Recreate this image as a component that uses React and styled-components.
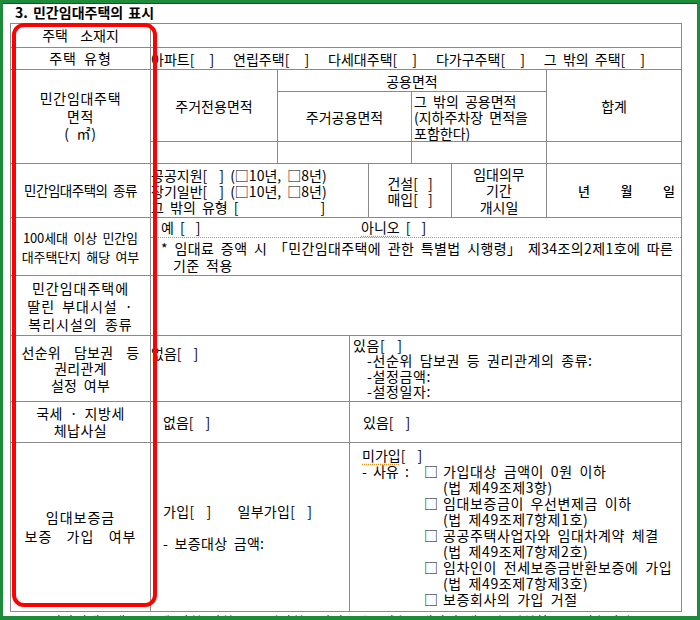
import React from "react";
import styled, { createGlobalStyle } from "styled-components";

const GlobalStyle = createGlobalStyle`
  html, body {
    margin: 0;
    padding: 0;
    background: #ffffff;
  }
  body {
    font-family: "Noto Sans CJK KR", "Noto Sans", sans-serif;
  }
`;

const Frame = styled.div`
  position: relative;
  width: 700px;
  height: 620px;
  box-sizing: border-box;
  border: 3px solid #1e8b3a;
  border-bottom-width: 4px;
  background: #ffffff;
  overflow: hidden;
`;

const Sheet = styled.div`
  height: 100%;
  border-top: 1px solid #3c3c3c;
  padding-left: 7px;
  color: #000000;
  font-size: 14px;
  word-spacing: 3px;
`;

const Heading = styled.h3`
  margin: 0;
  height: 19px;
  padding-left: 5px;
  font-size: 14px;
  line-height: 16px;
  font-weight: 700;
  word-spacing: 2px;
`;

const Form = styled.table`
  width: 671px;
  border-collapse: collapse;
  table-layout: fixed;
  border: 1px solid #6f6f6f;
`;

const Row = styled.tr`
  height: ${p => p.$h}px;
`;

const Label = styled.th`
  border: 1px solid #8a8a8a;
  padding: 0;
  font-weight: 400;
  font-size: ${p => p.$fs || 14}px;
  text-align: center;
  vertical-align: middle;
  letter-spacing: ${p => p.$ls || 0}px;
  line-height: ${p => p.$lh || 17}px;
  white-space: nowrap;
  overflow: hidden;
`;

const Cell = styled.td`
  border: 1px solid #8a8a8a;
  padding: ${p => p.$pad || "0"};
  text-align: ${p => p.$align || "left"};
  vertical-align: ${p => p.$valign || "middle"};
  line-height: ${p => p.$lh || 16}px;
  letter-spacing: ${p => p.$ls || 0}px;
  white-space: nowrap;
  overflow: hidden;
`;

/* the empty space inside a "[   ]" tick box */
const Blank = styled.span`
  display: inline-block;
  width: ${p => p.$w || 15}px;
`;

const Gap = styled.span`
  display: inline-block;
  width: ${p => p.$w || 19}px;
`;

const Wrap = styled.div`
  white-space: normal;
  line-height: 16px;
`;

const DateLine = styled.div`
  display: flex;
  justify-content: space-between;
  padding: 0 6px 0 31px;
  font-size: 13px;
  font-weight: 500;
`;

const Choices = styled.div`
  display: grid;
  grid-template-columns: 200px auto;
  height: 19px;
  line-height: 18px;
  padding-left: 10px;
  border-bottom: 1px dotted #9a9a9a;
`;

const Note = styled.div`
  padding: 2px 0 0 22px;
  text-indent: -12px;
  line-height: 17px;
  letter-spacing: 0.4px;
`;

const Misspelled = styled.span`
  text-decoration: underline dotted #e58a1a;
  text-underline-offset: 3px;
`;

const Indent = styled.div`
  padding-left: ${p => p.$by || 14}px;
`;

const Pair = styled.div`
  display: flex;
  flex-direction: column;
  gap: 16px;
`;

const Reasons = styled.div`
  display: grid;
  grid-template-columns: 62px auto;
`;

const ReasonList = styled.div`
  display: flex;
  flex-direction: column;
  letter-spacing: 0.6px;
`;

const Reason = styled.div`
  display: grid;
  grid-template-columns: 19px auto;
`;

const Highlight = styled.div`
  position: absolute;
  left: 9px;
  top: 20px;
  width: 145px;
  height: 584px;
  box-sizing: border-box;
  border: 4px solid #ff0000;
  border-radius: 12px;
  pointer-events: none;
`;

const Footnote = styled.p`
  margin: 1px 0 0 18px;
  line-height: 16px;
  white-space: nowrap;
`;

const Tick = ({ w }) => (
  <>
    [<Blank $w={w} />]
  </>
);

const reasons = [
  ["가입대상 금액이 0원 이하", "(법 제49조제3항)"],
  ["임대보증금이 우선변제금 이하", "(법 제49조제7항제1호)"],
  ["공공주택사업자와 임대차계약 체결", "(법 제49조제7항제2호)"],
  ["임차인이 전세보증금반환보증에 가입", "(법 제49조제7항제3호)"],
  ["보증회사의 가입 거절"],
];

export default function App() {
  return (
    <Frame>
      <GlobalStyle />
      <Sheet>
        <Heading>3. 민간임대주택의 표시</Heading>
        <Form>
          <colgroup>
            <col style={{ width: 140 }} />
            <col style={{ width: 127 }} />
            <col style={{ width: 72 }} />
            <col style={{ width: 19 }} />
            <col style={{ width: 43 }} />
            <col style={{ width: 40 }} />
            <col style={{ width: 95 }} />
            <col style={{ width: 135 }} />
          </colgroup>
          <tbody>
            <Row $h={24}>
              <Label>주택&nbsp; 소재지</Label>
              <Cell colSpan={7} />
            </Row>
            <Row $h={22}>
              <Label $ls={1}>주택 유형</Label>
              <Cell colSpan={7}>
                아파트<Tick /><Gap />연립주택<Tick /><Gap />다세대주택<Tick /><Gap />다가구주택<Tick /><Gap />그 밖의 주택<Tick />
              </Cell>
            </Row>
            <Row $h={22}>
              <Label rowSpan={3} $lh={17.5} $ls={0.7}>
                민간임대주택
                <br />
                면적
                <br />( ㎡)
              </Label>
              <Cell rowSpan={2} $align="center">주거전용면적</Cell>
              <Cell colSpan={5} $align="center">공용면적</Cell>
              <Cell rowSpan={2} $align="center">합계</Cell>
            </Row>
            <Row $h={50}>
              <Cell colSpan={3} $align="center">주거공용면적</Cell>
              <Cell colSpan={2} $pad="0 0 0 2px">
                <Wrap>
                  그 밖의 공용면적
                  <br />
                  (지하주차장 면적을
                  <br />
                  포함한다)
                </Wrap>
              </Cell>
            </Row>
            <Row $h={22}>
              <Cell />
              <Cell colSpan={3} />
              <Cell colSpan={2} />
              <Cell />
            </Row>
            <Row $h={54}>
              <Label $ls={-0.5} $fs={13.5}>민간임대주택의 종류</Label>
              <Cell colSpan={3}>
                공공지원<Tick w={12} /> (□10년, □8년)
                <br />
                장기일반<Tick w={12} /> (□10년, □8년)
                <br />
                그 밖의 유형 <Tick w={82} />
              </Cell>
              <Cell colSpan={2} $align="center" $lh={16}>
                건설<Tick w={10} />
                <br />
                매입<Tick w={10} />
              </Cell>
              <Cell $align="center" $lh={16.5}>
                임대의무
                <br />
                기간
                <br />
                개시일
              </Cell>
              <Cell>
                <DateLine>
                  <span>년</span>
                  <span>월</span>
                  <span>일</span>
                </DateLine>
              </Cell>
            </Row>
            <Row $h={58}>
              <Label $fs={13} $ls={-0.2} $lh={19}>
                100세대 이상 민간임
                <br />
                대주택단지 해당 여부
              </Label>
              <Cell colSpan={7} $valign="top">
                <Choices>
                  <span>
                    예 <Tick w={11} />
                  </span>
                  <span>
                    <Misspelled>아니오</Misspelled> <Tick w={11} />
                  </span>
                </Choices>
                <Note>
                  * 임대료 증액 시 「민간임대주택에 관한 특별법 시행령」 제34조의2제1호에 따른
                  <br />
                  기준 적용
                </Note>
              </Cell>
            </Row>
            <Row $h={60}>
              <Label $lh={18} $ls={1}>
                민간임대주택에
                <br />
                딸린 부대시설 ·
                <br />
                복리시설의 종류
              </Label>
              <Cell colSpan={7} />
            </Row>
            <Row $h={66}>
              <Label $lh={16.5} $ls={0.3}>
                선순위&nbsp; 담보권&nbsp; 등
                <br />
                권리관계
                <br />
                설정 여부
              </Label>
              <Cell colSpan={2} $valign="top" $pad="9px 0 0 0">
                없음<Tick w={12} />
              </Cell>
              <Cell colSpan={5} $pad="0 0 0 3px" $lh={15.5} $ls={0.6}>
                있음<Tick w={12} />
                <Indent>-선순위 담보권 등 권리관계의 종류:</Indent>
                <Indent>-설정금액:</Indent>
                <Indent>-설정일자:</Indent>
              </Cell>
            </Row>
            <Row $h={41}>
              <Label $lh={17} $ls={0.5}>
                국세 · 지방세
                <br />
                체납사실
              </Label>
              <Cell colSpan={2} $pad="0 0 0 12px">
                없음<Tick w={12} />
              </Cell>
              <Cell colSpan={5} $pad="0 0 0 13px">
                있음<Tick w={12} />
              </Cell>
            </Row>
            <Row $h={169}>
              <Label $lh={19} $ls={1}>
                임대보증금
                <br />
                보증&nbsp; 가입&nbsp; 여부
              </Label>
              <Cell colSpan={2} $pad="0 0 0 12px" $ls={0.3}>
                <Pair>
                  <span>
                    가입<Tick w={12} />
                    <Gap $w={26} />
                    일부가입<Tick w={12} />
                  </span>
                  <span>- 보증대상 금액:</span>
                </Pair>
              </Cell>
              <Cell colSpan={5} $valign="top" $pad="4px 0 0 12px">
                <div>
                  <Misspelled>미가입</Misspelled>
                  <Tick w={12} />
                </div>
                <Reasons>
                  <span>- 사유 :</span>
                  <ReasonList>
                    {reasons.map(([main, law]) => (
                      <Reason key={main}>
                        <span>□</span>
                        <span>
                          {main}
                          {law && <br />}
                          {law}
                        </span>
                      </Reason>
                    ))}
                  </ReasonList>
                </Reasons>
              </Cell>
            </Row>
          </tbody>
        </Form>
        <Footnote>
          ※ 민간임대주택 표시에 관한 사항은 등기사항증명서 또는 건축물대장의 내용과 일치하도록 적습니다.
        </Footnote>
      </Sheet>
      <Highlight />
    </Frame>
  );
}
